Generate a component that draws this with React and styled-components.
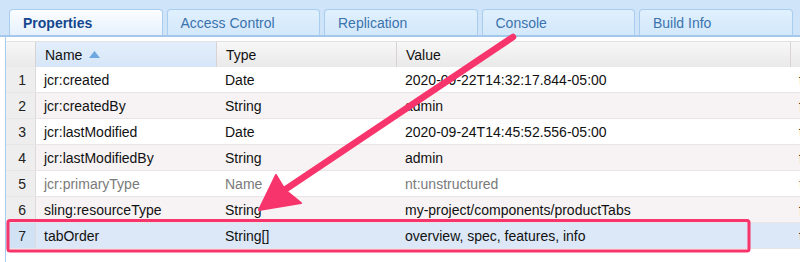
import React from "react";
import styled, { createGlobalStyle } from "styled-components";

const GlobalStyle = createGlobalStyle`
  html, body {
    margin: 0;
    padding: 0;
    background: #ffffff;
  }
  body {
    font-family: "Liberation Sans", Arial, Helvetica, sans-serif;
    width: 800px;
    height: 262px;
    overflow: hidden;
  }
`;

const Page = styled.div`
  position: relative;
  width: 800px;
  height: 262px;
  overflow: hidden;
  background: #fff;
`;

const TabStrip = styled.div`
  display: flex;
  gap: 4px;
  height: 26px;
  padding: 9px 0 0 9px;
  background: #cfe4f8;
  border-bottom: 2px solid #a4c8ec;
`;

const Tab = styled.div`
  box-sizing: border-box;
  width: 153.5px;
  flex: none;
  height: 26px;
  padding-left: 13px;
  display: flex;
  align-items: center;
  font-size: 14px;
  border: 1px solid #a9cdef;
  border-bottom: none;
  border-radius: 4px 4px 0 0;
  color: ${(p) => (p.active ? "#15478e" : "#3b73ad")};
  font-weight: ${(p) => (p.active ? "bold" : "normal")};
  background: ${(p) =>
    p.active
      ? "linear-gradient(#fbfdff, #e6f1fd)"
      : "linear-gradient(#e0f0fd, #d3e8fb)"};
`;

const Panel = styled.div`
  margin-left: 5px;
  padding-top: 4px;
  border-left: 1px solid #a9cbec;
  height: 230px;
`;

const Row = styled.div`
  display: grid;
  grid-template-columns: 30px 181px 180px 394px 1fr;
  height: 26px;
  font-size: 14px;
  color: ${(p) => (p.muted ? "#7a7a7a" : "#111")};
  background: ${(p) =>
    p.selected ? "#dce8f7" : p.striped ? "#f7f3f4" : "#ffffff"};
  border-bottom: 1px solid #e9e4e5;
  box-sizing: border-box;
`;

const HeaderRow = styled.div`
  display: grid;
  grid-template-columns: 30px 181px 180px 394px 1fr;
  height: 26px;
  font-size: 14px;
  color: #111;
  background: linear-gradient(#f7f7f7, #e9e9e9);
  border-top: 1px solid #e2e2e2;
  box-sizing: border-box;
`;

const HeadCell = styled.div`
  display: flex;
  align-items: center;
  gap: 7px;
  padding-left: 9px;
  white-space: nowrap;
  overflow: hidden;
  border-right: 1px solid #d8d2d2;
  background: ${(p) => (p.sorted ? "linear-gradient(#e3eefa, #d6e6f8)" : "transparent")};
`;

const Cell = styled.div`
  display: flex;
  align-items: center;
  padding-left: 8px;
  white-space: nowrap;
  overflow: hidden;
`;

const NumCell = styled.div`
  display: flex;
  align-items: center;
  justify-content: flex-end;
  padding-right: 9px;
  color: #222;
  background: ${(p) => (p.selected ? "#d2e2f5" : "#efeeee")};
  border-right: 1px solid #dcdada;
`;

const Overlay = styled.svg`
  position: absolute;
  left: 0;
  top: 0;
  pointer-events: none;
`;

const rows = [
  ["jcr:created", "Date", "2020-09-22T14:32:17.844-05:00"],
  ["jcr:createdBy", "String", "admin"],
  ["jcr:lastModified", "Date", "2020-09-24T14:45:52.556-05:00"],
  ["jcr:lastModifiedBy", "String", "admin"],
  ["jcr:primaryType", "Name", "nt:unstructured"],
  ["sling:resourceType", "String", "my-project/components/productTabs"],
  ["tabOrder", "String[]", "overview, spec, features, info"],
];

const tabs = ["Properties", "Access Control", "Replication", "Console", "Build Info"];

export default function App() {
  return (
    <Page>
      <GlobalStyle />
      <TabStrip>
        {tabs.map((t, i) => (
          <Tab key={t} active={i === 0}>
            {t}
          </Tab>
        ))}
      </TabStrip>
      <Panel>
        <HeaderRow>
          <HeadCell />
          <HeadCell sorted>
            Name
            <svg width="11" height="7" viewBox="0 0 11 7">
              <polygon points="0,7 5.5,0 11,7" fill="#6ca7e0" />
            </svg>
          </HeadCell>
          <HeadCell>Type</HeadCell>
          <HeadCell>Value</HeadCell>
          <HeadCell>P</HeadCell>
        </HeaderRow>
        {rows.map((r, i) => (
          <Row
            key={r[0]}
            striped={i % 2 === 1}
            selected={i === 6}
            muted={i === 4}
          >
            <NumCell selected={i === 6}>{i + 1}</NumCell>
            <Cell>{r[0]}</Cell>
            <Cell>{r[1]}</Cell>
            <Cell>{r[2]}</Cell>
            <Cell>false</Cell>
          </Row>
        ))}
      </Panel>
      <Overlay width="800" height="262" viewBox="0 0 800 262">
        <rect
          x="8"
          y="220.5"
          width="741"
          height="30.5"
          rx="2"
          fill="none"
          stroke="#f7346b"
          strokeWidth="3"
        />
        <line
          x1="513"
          y1="37"
          x2="283"
          y2="191"
          stroke="#f7346b"
          strokeWidth="6.5"
          strokeLinecap="round"
        />
        <polygon
          points="259,210 276,175 285,190 301,203"
          fill="#f7346b"
          stroke="#f7346b"
          strokeWidth="2"
          strokeLinejoin="round"
        />
      </Overlay>
    </Page>
  );
}
